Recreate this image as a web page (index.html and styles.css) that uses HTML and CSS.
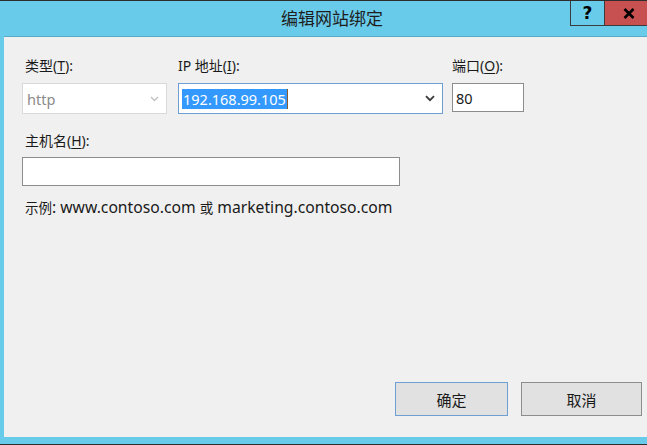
FILE: index.html
```html
<!DOCTYPE html>
<html lang="zh-CN">
<head>
    <meta charset="UTF-8" />
    <title>编辑网站绑定</title>
    <link rel="stylesheet" href="styles.css">
</head>
<body>
    <div class="window">
        <!-- caption -->
        <div class="titlebar">
            <div class="title">编辑网站绑定</div>
            <div class="cap-btn cap-help">?</div>
            <div class="cap-btn cap-close">
                <svg width="12" height="11" viewBox="0 0 12 11" aria-hidden="true">
                    <path d="M1.5 1 L10.5 10 M10.5 1 L1.5 10" stroke="#000" stroke-width="2.6" fill="none"/>
                </svg>
            </div>
        </div>

        <div class="client">
            <div class="row-top">
                <div class="field f-type">
                    <label>类型(<u>T</u>):</label>
                    <div class="combo combo-disabled">
                        <span class="combo-text">http</span>
                        <svg class="chev" width="9" height="6" viewBox="0 0 9 6"><path d="M1 1 L4.5 4.5 L8 1" stroke="#c2c2c2" stroke-width="1.4" fill="none"/></svg>
                    </div>
                </div>
                <div class="field f-ip">
                    <label>IP 地址(<u>I</u>):</label>
                    <div class="combo combo-focus">
                        <span class="combo-text"><span class="sel">192.168.99.105</span><span class="caret"></span></span>
                        <svg class="chev" width="10" height="7" viewBox="0 0 10 7"><path d="M1 1.2 L5 5.2 L9 1.2" stroke="#3a3a3a" stroke-width="1.8" fill="none"/></svg>
                    </div>
                </div>
                <div class="field f-port">
                    <label>端口(<u>O</u>):</label>
                    <div class="textbox port-box">80</div>
                </div>
            </div>

            <div class="field f-host">
                <label>主机名(<u>H</u>):</label>
                <div class="textbox host-box"></div>
            </div>

            <p class="hint"><span class="cjk">示例</span>: www.contoso.com <span class="cjk">或</span> marketing.contoso.com</p>

            <div class="buttons">
                <div class="btn btn-default">确定</div>
                <div class="btn btn-cancel">取消</div>
            </div>
        </div>
        <div class="frame-bottom"></div>
    </div>
</body>
</html>
```

FILE: styles.css
```css
html, body {
    margin: 0;
    height: 100%;
    overflow: hidden;
}
body {
    font-family: "Noto Sans", "Noto Sans CJK SC", sans-serif;
    font-size: 14px;
    color: #1a1a1a;
}
.window {
    width: 647px;
    height: 445px;
    display: flex;
    flex-direction: column;
    background: #69cbea;
    border-top: 1px solid #2d2d2d;
    border-bottom: 1px solid #2d2d2d;
    box-sizing: border-box;
}
.titlebar {
    height: 35px;
    display: flex;
    align-items: flex-start;
    flex-shrink: 0;
}
.title {
    flex: 1;
    text-align: center;
    padding-left: 94px;
    padding-top: 5px;
    font-family: "Noto Sans CJK SC", sans-serif;
    font-size: 17px;
    line-height: 24px;
    color: #1e1e1e;
}
.cap-btn {
    height: 25px;
    box-sizing: border-box;
    border: 1px solid #3c3c3c;
    border-top: none;
    display: flex;
    align-items: center;
    justify-content: center;
}
.cap-help {
    width: 35px;
    font-family: "DejaVu Sans", sans-serif;
    font-weight: bold;
    font-size: 17px;
    color: #000;
    line-height: 24px;
}
.cap-close {
    width: 42px;
    border-left: none;
    border-right: none;
    background: #c75050;
    padding-left: 6px;
    padding-top: 1px;
}
.client {
    flex: 1;
    margin-left: 4px;
    background: #f0f0f0;
    border-top: 1px solid #5aa9c9;
    display: flex;
    flex-direction: column;
    padding: 20px 0 21px 18px;
}
.row-top {
    display: flex;
}
.field {
    display: flex;
    flex-direction: column;
}
.field label {
    font-family: "Noto Sans", "Noto Sans CJK SC", sans-serif;
    font-size: 14px;
    line-height: 18px;
    height: 18px;
    padding-left: 1px;
    margin-bottom: 8px;
    color: #1a1a1a;
}
.field label u {
    text-underline-offset: 2px;
}
.f-type { width: 156px; }
.f-type label { padding-left: 3px; }
.f-ip { width: 274px; }
.f-ip label { padding-left: 0; }
.f-port { width: 80px; }
.f-port label { padding-left: 0; }

.combo, .textbox {
    box-sizing: border-box;
    background: #fff;
    display: flex;
    align-items: center;
    font-size: 14.5px;
}
.combo {
    height: 31px;
    justify-content: space-between;
    padding: 0 7px 0 4px;
}
.combo-disabled {
    width: 145px;
    border: 1px solid #d9d9d9;
    color: #8a8a8a;
}
.combo-focus {
    width: 265px;
    border: 1px solid #6d9fd3;
    padding-left: 3px;
}
.combo-text {
    display: flex;
    align-items: center;
}
.sel {
    background: #3399ff;
    color: #fff;
    line-height: 20px;
    padding: 0 1px;
}
.caret {
    width: 1px;
    height: 20px;
    background: #8a5a2a;
}
.textbox {
    border: 1px solid #8d8d8d;
    padding-left: 3px;
    color: #1a1a1a;
}
.port-box {
    width: 72px;
    height: 29px;
}
.f-host {
    margin-top: 18px;
}
.f-host label {
    padding-left: 3px;
    margin-bottom: 7px;
}
.host-box {
    width: 378px;
    height: 29px;
}
.hint {
    margin: 12px 0 0 3px;
    font-size: 15.7px;
    line-height: 18px;
    color: #1a1a1a;
}
.hint .cjk {
    font-size: 13.5px;
}
.buttons {
    margin-top: auto;
    display: flex;
    gap: 13px;
    padding-left: 373px;
}
.btn {
    height: 34px;
    box-sizing: border-box;
    background: #e1e1e1;
    display: flex;
    align-items: center;
    justify-content: center;
    font-family: "Noto Sans CJK SC", sans-serif;
    font-size: 15px;
    color: #1a1a1a;
}
.btn-default {
    width: 113px;
    border: 1px solid #6d9fd3;
}
.btn-cancel {
    width: 121px;
    border: 1px solid #8d8d8d;
}
.frame-bottom {
    height: 7px;
    flex-shrink: 0;
}
```
